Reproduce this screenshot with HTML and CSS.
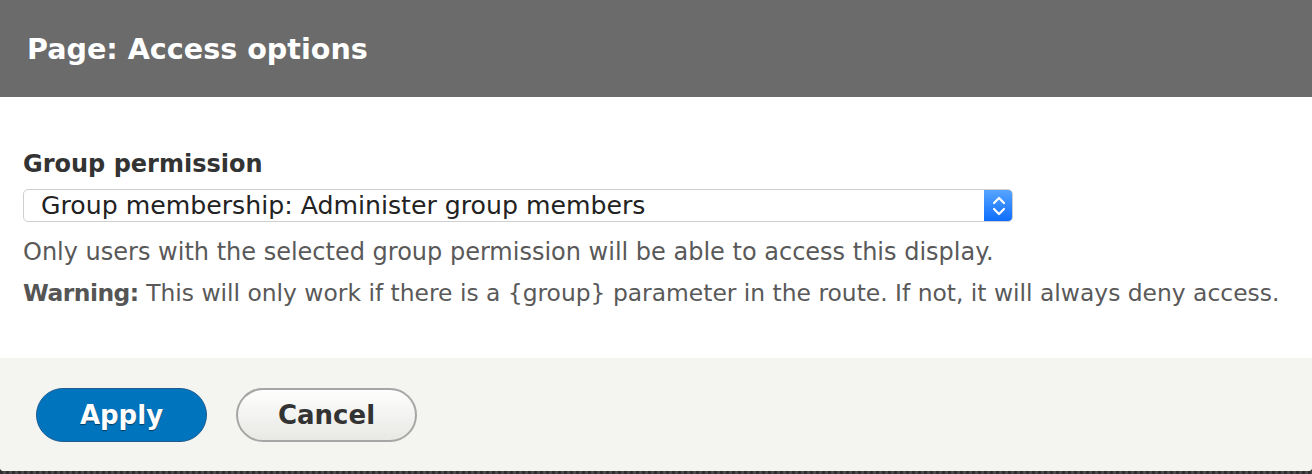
FILE: index.html
```html
<!DOCTYPE html>
<html>
<head>
<meta charset="utf-8">
<link rel="stylesheet" href="styles.css">
</head>
<body>
<div class="dialog">
  <div class="titlebar"><h1 class="title">Page: Access options</h1></div>
  <div class="content">
    <label class="label">Group permission</label>
    <div class="select">
      <span class="select-text">Group membership: Administer group members</span>
      <span class="select-arrow">
        <svg width="16" height="22" viewBox="0 0 16 22"><path d="M3 8 L8 3 L13 8 M3 14 L8 19 L13 14" fill="none" stroke="#fff" stroke-width="2.2" stroke-linecap="round" stroke-linejoin="round"/></svg>
      </span>
    </div>
    <p class="desc">Only users with the selected group permission will be able to access this display.</p>
    <p class="desc desc-warning"><strong>Warning:</strong> This will only work if there is a {group} parameter in the route. If not, it will always deny access.</p>
  </div>
  <div class="footer">
    <button class="btn btn-primary">Apply</button>
    <button class="btn btn-secondary">Cancel</button>
  </div>
</div>
<div class="overlay-edge"></div>
</body>
</html>
```
FILE: styles.css
```css
html, body {
  margin: 0;
  padding: 0;
  background: #3a3a3a;
  font-family: "DejaVu Sans", "Lucida Grande", Verdana, sans-serif;
}
.dialog {
  width: 1312px;
  height: 471px;
  background: #fff;
  border-radius: 0 0 4px 4px;
  overflow: hidden;
  display: flex;
  flex-direction: column;
}
.titlebar {
  height: 97px;
  background: #6b6b6b;
  display: flex;
  align-items: center;
  padding-left: 27px;
  box-sizing: border-box;
}
.title {
  margin: 0;
  color: #fff;
  font-size: 28.6px;
  font-weight: bold;
}
.content {
  flex: 1;
  padding: 53px 23px 0;
  box-sizing: border-box;
}
.label {
  display: block;
  font-size: 24px;
  font-weight: bold;
  color: #333;
  line-height: 28px;
  margin-bottom: 11px;
}
.select {
  width: 990px;
  height: 33px;
  box-sizing: border-box;
  border: 1px solid #cfcfcf;
  border-radius: 5px;
  display: flex;
  align-items: center;
  justify-content: space-between;
  overflow: hidden;
  background: #fff;
}
.select-text {
  padding-left: 17px;
  font-size: 25.2px;
  color: #222;
  white-space: nowrap;
}
.select-arrow {
  width: 29px;
  height: 33px;
  margin: -1px -1px -1px 0;
  background: linear-gradient(#5aa6ff, #0a6cfe);
  display: flex;
  align-items: center;
  justify-content: center;
}
.desc {
  margin: 0;
  font-size: 24px;
  color: #595959;
  line-height: 41px;
  white-space: nowrap;
}
.desc:first-of-type {
  margin-top: 10px;
}
.desc-warning {
  font-size: 23.4px;
}
.desc strong {
  color: #555;
  letter-spacing: -0.5px;
}
.footer {
  height: 113px;
  background: #f4f4f0;
  display: flex;
  align-items: center;
  gap: 29px;
  padding-left: 36px;
  box-sizing: border-box;
}
.btn {
  height: 54px;
  border-radius: 27px;
  font-family: "DejaVu Sans", "Lucida Grande", Verdana, sans-serif;
  font-size: 26px;
  font-weight: bold;
  cursor: pointer;
}
.btn-primary {
  width: 171px;
  background: #0074bd;
  border: 1px solid #1e5c90;
  color: #fff;
  text-shadow: 0 1px 1px rgba(0,0,0,0.5);
}
.btn-secondary {
  width: 181px;
  background: linear-gradient(#fefefe, #e8e8e4);
  border: 2px solid #a6a6a6;
  color: #333;
}
.overlay-edge {
  height: 3px;
  background: repeating-linear-gradient(90deg, #2e2e2e 0 3px, #4a4a4a 3px 6px);
}
```
